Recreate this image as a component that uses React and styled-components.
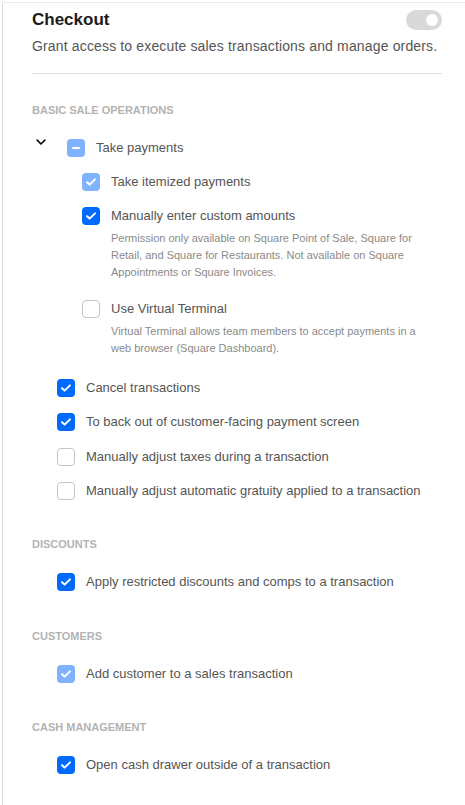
import React from "react";
import styled, { createGlobalStyle } from "styled-components";

const GlobalStyle = createGlobalStyle`
  html, body { margin: 0; padding: 0; background: #ffffff; }
  body { font-family: "Liberation Sans", Arial, sans-serif; -webkit-font-smoothing: antialiased; }
  * { box-sizing: border-box; }
`;

const Panel = styled.div`
  margin: 2px 0 0 2px;
  border-left: 1px solid #dadada;
  border-top: 1px solid #ececec;
  padding: 5px 23px 30px 29px;
  min-height: 803px;
`;

const Header = styled.header`
  display: flex;
  align-items: center;
  justify-content: space-between;
  height: 24px;
`;

const Title = styled.h1`
  margin: 0;
  font-size: 17px;
  line-height: 24px;
  font-weight: 700;
  color: #1c1c1c;
`;

const Toggle = styled.span`
  display: flex;
  align-items: center;
  justify-content: flex-end;
  width: 36px;
  height: 20px;
  padding: 0 4px;
  border-radius: 10px;
  background: #d9d9d9;
`;

const Knob = styled.span`
  width: 12px;
  height: 12px;
  border-radius: 50%;
  background: #ffffff;
`;

const Subtitle = styled.p`
  margin: 5px 0 0;
  font-size: 14px;
  line-height: 18px;
  letter-spacing: 0.15px;
  color: #555555;
`;

const Divider = styled.hr`
  margin: 18px 0 0;
  border: none;
  height: 1px;
  background: #dedede;
`;

const Section = styled.section`
  margin-top: ${(p) => p.$top}px;
`;

const Heading = styled.h2`
  margin: 0 0 21px;
  font-size: 11px;
  line-height: 16px;
  font-weight: 700;
  color: #b3b3b3;
  text-transform: uppercase;
`;

const List = styled.div`
  display: flex;
  flex-direction: column;
  gap: ${(p) => p.$gap}px;
`;

const Children = styled(List)`
  margin-top: 16px;
  padding-bottom: 2px;
`;

const Item = styled.div`
  padding-left: ${(p) => p.$indent}px;
`;

const Row = styled.div`
  display: flex;
  align-items: center;
  gap: 11px;
`;

const ChevronCell = styled.span`
  display: flex;
  align-self: flex-start;
  width: 35px;
  height: 18px;
  padding-left: 4px;
  margin-right: -11px;
`;

const Box = styled.span`
  flex: none;
  display: flex;
  align-items: center;
  justify-content: center;
  width: 18px;
  height: 18px;
  border-radius: 4px;
  background: ${(p) =>
    p.$state === "on" ? "#006aff" : p.$state === "off" ? "#ffffff" : "#80b3ff"};
  border: ${(p) => (p.$state === "off" ? "1px solid #c4c4c4" : "none")};
`;

const Dash = styled.span`
  width: 8px;
  height: 2px;
  border-radius: 1px;
  background: #ffffff;
`;

const Label = styled.span`
  font-size: 13px;
  line-height: 18px;
  color: #555555;
`;

const Desc = styled.p`
  margin: 5px 0 3px 29px;
  max-width: 320px;
  font-size: 11px;
  line-height: 17px;
  color: #8a8a8a;
`;

function Checkbox({ state }) {
  return (
    <Box $state={state}>
      {state === "mixed" ? (
        <Dash />
      ) : state !== "off" ? (
        <svg width="12" height="10" viewBox="0 0 12 10">
          <path
            d="M2 5.2 L4.6 7.6 L10 2.4"
            fill="none"
            stroke="#ffffff"
            strokeWidth="2"
            strokeLinecap="round"
            strokeLinejoin="round"
          />
        </svg>
      ) : null}
    </Box>
  );
}

function Permission({ state, label, desc, indent = 25 }) {
  return (
    <Item $indent={indent}>
      <Row>
        <Checkbox state={state} />
        <Label>{label}</Label>
      </Row>
      {desc && <Desc>{desc}</Desc>}
    </Item>
  );
}

export default function App() {
  return (
    <>
      <GlobalStyle />
      <Panel>
        <Header>
          <Title>Checkout</Title>
          <Toggle>
            <Knob />
          </Toggle>
        </Header>
        <Subtitle>Grant access to execute sales transactions and manage orders.</Subtitle>
        <Divider />

        <Section $top={28}>
          <Heading>Basic Sale Operations</Heading>
          <List $gap={16.5}>
            <Item $indent={0}>
              <Row>
                <ChevronCell>
                  <svg width="10" height="7" viewBox="0 0 10 7">
                    <path
                      d="M1.2 1.2 L5 5 L8.8 1.2"
                      fill="none"
                      stroke="#111111"
                      strokeWidth="1.7"
                      strokeLinecap="round"
                      strokeLinejoin="round"
                    />
                  </svg>
                </ChevronCell>
                <Checkbox state="mixed" />
                <Label>Take payments</Label>
              </Row>
              <Children $gap={16}>
                <Permission indent={50} state="light" label="Take itemized payments" />
                <Permission
                  indent={50}
                  state="on"
                  label="Manually enter custom amounts"
                  desc="Permission only available on Square Point of Sale, Square for Retail, and Square for Restaurants. Not available on Square Appointments or Square Invoices."
                />
                <Permission
                  indent={50}
                  state="off"
                  label="Use Virtual Terminal"
                  desc="Virtual Terminal allows team members to accept payments in a web browser (Square Dashboard)."
                />
              </Children>
            </Item>
            <Permission state="on" label="Cancel transactions" />
            <Permission state="on" label="To back out of customer-facing payment screen" />
            <Permission state="off" label="Manually adjust taxes during a transaction" />
            <Permission state="off" label="Manually adjust automatic gratuity applied to a transaction" />
          </List>
        </Section>

        <Section $top={36}>
          <Heading>Discounts</Heading>
          <List $gap={16.5}>
            <Permission state="on" label="Apply restricted discounts and comps to a transaction" />
          </List>
        </Section>

        <Section $top={36.5}>
          <Heading>Customers</Heading>
          <List $gap={16.5}>
            <Permission state="light" label="Add customer to a sales transaction" />
          </List>
        </Section>

        <Section $top={36.5}>
          <Heading>Cash Management</Heading>
          <List $gap={16.5}>
            <Permission state="on" label="Open cash drawer outside of a transaction" />
          </List>
        </Section>
      </Panel>
    </>
  );
}
